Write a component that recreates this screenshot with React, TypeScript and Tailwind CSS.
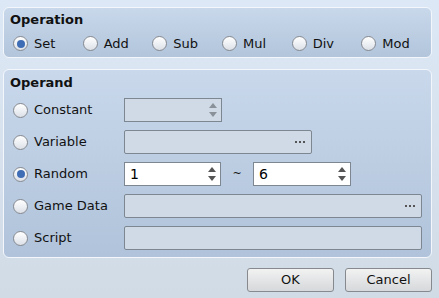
import React from "react";

function Radio({ checked }: { checked?: boolean }) {
  return (
    <span className="w-[15px] h-[15px] rounded-full border border-[#868a90] bg-gradient-to-b from-white to-[#dce1e8] flex items-center justify-center shrink-0">
      {checked && <span className="w-[8px] h-[8px] rounded-full bg-[#3f6db5]" />}
    </span>
  );
}

function Spin({ value, disabled, w }: { value?: string; disabled?: boolean; w: string }) {
  return (
    <div
      className={`${w} h-[24px] border border-[#7d8791] flex items-center justify-between pl-[5px] pr-[4px] ${
        disabled ? "bg-[#cfdae6]" : "bg-white"
      }`}
    >
      <span className="text-[14px] text-black">{value}</span>
      <span className="flex flex-col gap-[4px] items-center">
        <svg width="8" height="5" viewBox="0 0 8 5">
          <path d="M4 0 L8 5 L0 5 Z" fill={disabled ? "#8a9198" : "#555"} />
        </svg>
        <svg width="8" height="5" viewBox="0 0 8 5">
          <path d="M0 0 L8 0 L4 5 Z" fill={disabled ? "#8a9198" : "#555"} />
        </svg>
      </span>
    </div>
  );
}

function Picker({ w, dots }: { w: string; dots?: boolean }) {
  return (
    <div className={`${w} h-[24px] border border-[#7d8791] rounded-[2px] bg-[#cfdae6] flex items-center justify-end pr-[6px]`}>
      {dots && (
        <span className="flex gap-[2px]">
          <span className="w-[2px] h-[2px] bg-[#555]" />
          <span className="w-[2px] h-[2px] bg-[#555]" />
          <span className="w-[2px] h-[2px] bg-[#555]" />
        </span>
      )}
    </div>
  );
}

const ops = ["Set", "Add", "Sub", "Mul", "Div", "Mod"];

export default function App() {
  return (
    <div
      className="w-[439px] h-[298px] bg-gradient-to-b from-[#dde8f6] to-[#d1dbe6] flex flex-col pl-[3px] pt-[7px] text-[13px] text-[#111]"
      style={{ fontFamily: '"DejaVu Sans", Verdana, sans-serif' }}
    >
      {/* Operation */}
      <div className="w-[429px] h-[51px] rounded-[6px] border border-[#f3f7fc] bg-gradient-to-b from-[#c9d8eb] to-[#b2c5db] flex flex-col pl-[6px] pt-[4px]">
        <div className="font-bold leading-[16px]">Operation</div>
        <div className="flex mt-[6px] pl-[3px]">
          {ops.map((o, i) => (
            <div key={o} className="w-[70px] flex items-center gap-[6px]">
              <Radio checked={i === 0} />
              <span>{o}</span>
            </div>
          ))}
        </div>
      </div>

      {/* Operand */}
      <div className="w-[429px] h-[189px] mt-[11px] rounded-[6px] border border-[#f3f7fc] bg-gradient-to-b from-[#c9d8eb] to-[#b0c3da] flex flex-col pl-[6px] pt-[5px]">
        <div className="font-bold leading-[16px]">Operand</div>
        <div className="flex flex-col gap-[8px] mt-[7px]">
          <div className="flex items-center">
            <div className="w-[114px] flex items-center gap-[6px] pl-[3px]">
              <Radio />
              <span>Constant</span>
            </div>
            <Spin disabled w="w-[98px]" />
          </div>
          <div className="flex items-center">
            <div className="w-[114px] flex items-center gap-[6px] pl-[3px]">
              <Radio />
              <span>Variable</span>
            </div>
            <Picker dots w="w-[188px]" />
          </div>
          <div className="flex items-center">
            <div className="w-[114px] flex items-center gap-[6px] pl-[3px]">
              <Radio checked />
              <span>Random</span>
            </div>
            <Spin value="1" w="w-[97px]" />
            <span className="w-[32px] text-center text-[11px]">~</span>
            <Spin value="6" w="w-[98px]" />
          </div>
          <div className="flex items-center">
            <div className="w-[114px] flex items-center gap-[6px] pl-[3px]">
              <Radio />
              <span>Game Data</span>
            </div>
            <Picker dots w="w-[298px]" />
          </div>
          <div className="flex items-center">
            <div className="w-[114px] flex items-center gap-[6px] pl-[3px]">
              <Radio />
              <span>Script</span>
            </div>
            <Picker w="w-[298px]" />
          </div>
        </div>
      </div>

      {/* Buttons */}
      <div className="w-[429px] flex justify-end gap-[11px] mt-[10px]">
        <button className="w-[87px] h-[24px] rounded-[3px] border border-[#868a8f] bg-gradient-to-b from-[#f2f2f2] to-[#d6d8db] text-[13px]">
          OK
        </button>
        <button className="w-[87px] h-[24px] rounded-[3px] border border-[#868a8f] bg-gradient-to-b from-[#f2f2f2] to-[#d6d8db] text-[13px]">
          Cancel
        </button>
      </div>
    </div>
  );
}
